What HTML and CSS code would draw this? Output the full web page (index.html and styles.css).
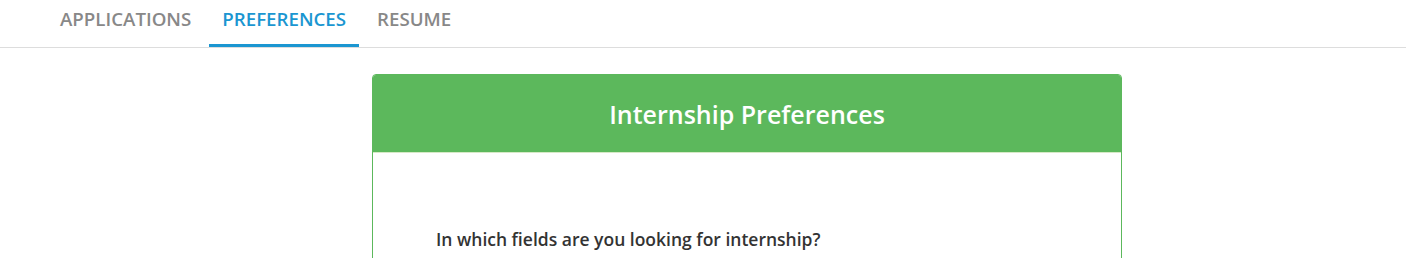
FILE: index.html
```html
<!DOCTYPE html>
<html lang="en">
<head>
  <meta charset="UTF-8">
  <meta name="viewport" content="width=device-width, initial-scale=1.0">
  <title>Preferences</title>
  <link rel="stylesheet" href="styles.css">
</head>
<body>
  <ul class="tabs">
    <li class="tab"><a href="#">Applications</a></li>
    <li class="tab active"><a href="#">Preferences</a></li>
    <li class="tab"><a href="#">Resume</a></li>
  </ul>

  <div class="panel">
    <div class="panel-heading">
      <h3 class="panel-title">Internship Preferences</h3>
    </div>
    <div class="panel-body">
      <label class="question">In which fields are you looking for internship?</label>
    </div>
  </div>
</body>
</html>
```

FILE: styles.css
```css
body {
  margin: 0;
  font-family: "Open Sans", "Liberation Sans", sans-serif;
  background: #fff;
  color: #333;
}

.tabs {
  list-style: none;
  margin: 0;
  padding: 0 0 0 47px;
  display: flex;
  gap: 5px;
  border-bottom: 1px solid #ddd;
}

.tab a {
  display: block;
  padding: 5px 13px 11px;
  font-size: 18.7px;
  font-weight: 600;
  text-transform: uppercase;
  text-decoration: none;
  color: #888;
  line-height: 28px;
  border-bottom: 3px solid transparent;
}

.tab.active a {
  color: #1b96d1;
  border-bottom-color: #1b96d1;
}

.panel {
  width: 750px;
  margin: 26px 0 0 372px;
  border: 1px solid #5cb85c;
  border-radius: 4px;
  box-sizing: border-box;
}

.panel-heading {
  background: #5cb85c;
  height: 78px;
  border-bottom: 1px solid #d6e9c6;
  border-radius: 3px 3px 0 0;
  display: flex;
  align-items: center;
  justify-content: center;
  box-sizing: border-box;
}

.panel-title {
  margin: 0;
  color: #fff;
  font-size: 25px;
  font-weight: 600;
}

.panel-body {
  padding: 74px 63px 40px;
}

.question {
  font-size: 17.5px;
  font-weight: 600;
  color: #333;
}
```
